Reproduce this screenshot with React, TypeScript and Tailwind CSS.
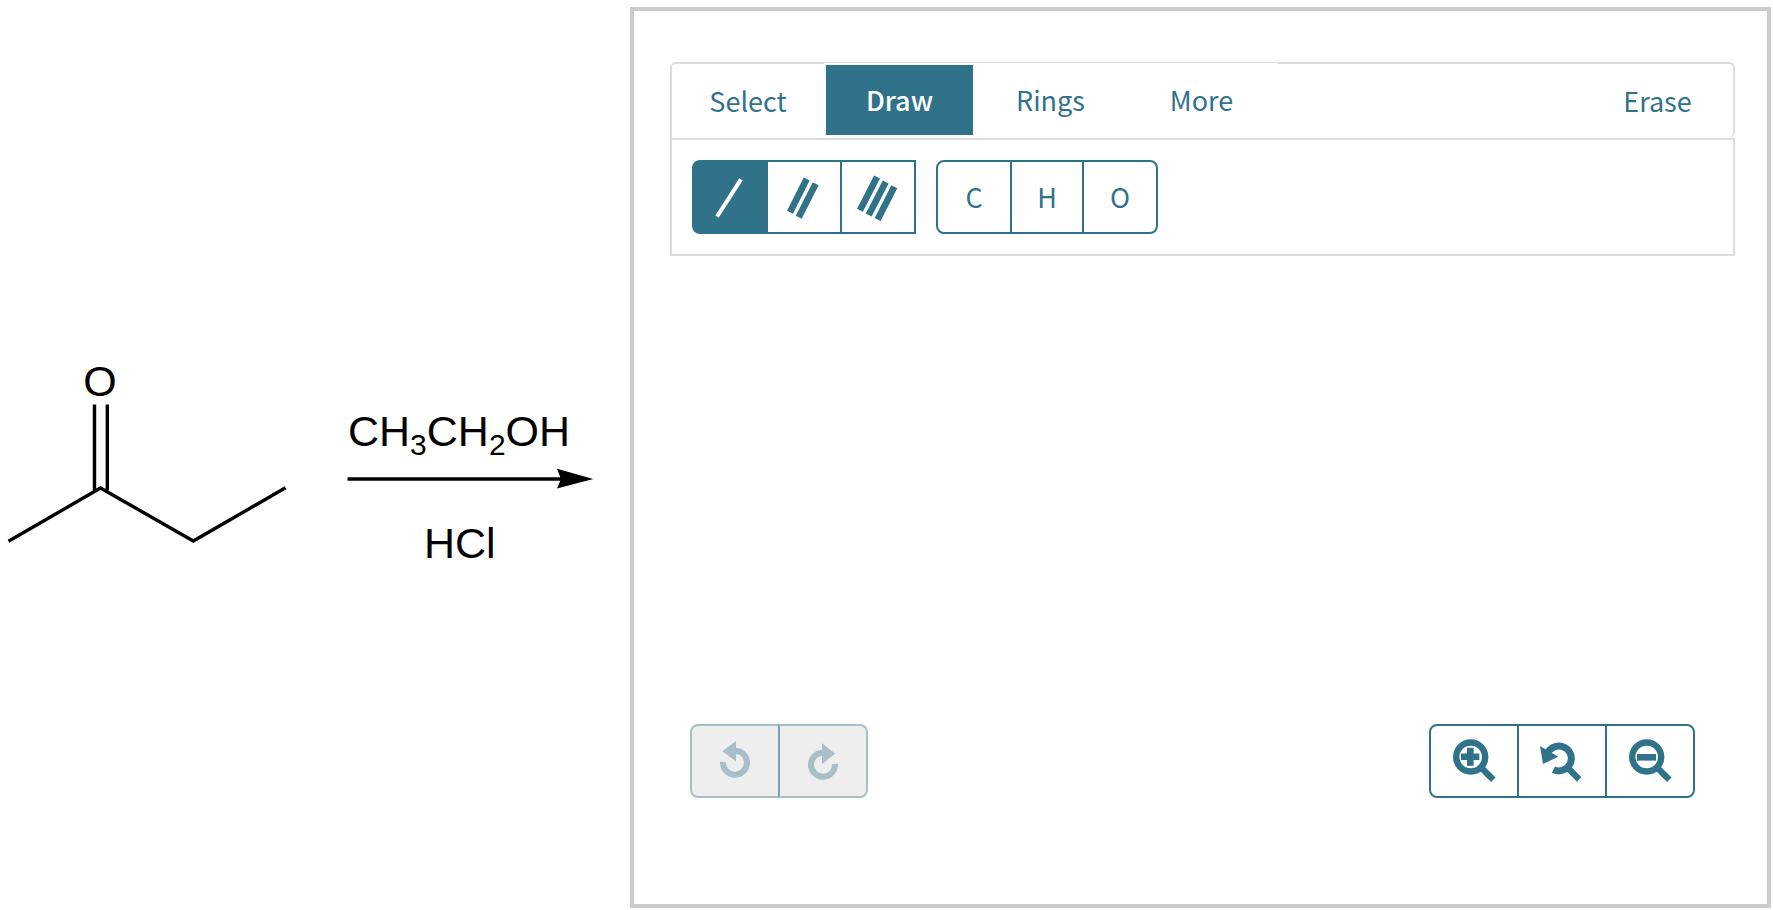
import { useState } from 'react';
import type { ReactNode } from 'react';

const tabs = ['Draw', 'Rings', 'More'];

const bonds = [
  { id: 'single', label: 'Single bond', width: 4, lines: ['M35 6.3 L11 43.7'] },
  { id: 'double', label: 'Double bond', width: 6.6, lines: ['M26.7 6 L10 39.3', 'M35.7 10.7 L18.7 44.3'] },
  { id: 'triple', label: 'Triple bond', width: 6.6, lines: ['M23 4 L6 37.3', 'M31.7 9 L14.7 42', 'M40.3 13.7 L23.7 46.5'] },
];

const atoms = [
  { symbol: 'C', className: 'w-[76px] rounded-l-lg' },
  { symbol: 'H', className: '-ml-0.5 w-[74px]' },
  { symbol: 'O', className: '-ml-0.5 w-[76px] rounded-r-lg' },
];

function Icon({ children }: { children: ReactNode }) {
  return (
    <svg width="48" height="48" viewBox="0 0 48 48" fill="none" stroke="currentColor" aria-hidden="true">
      {children}
    </svg>
  );
}

function Reaction() {
  return (
    <svg
      className="shrink-0"
      width="600"
      height="229"
      viewBox="0 343 600 229"
      fontFamily='"Liberation Sans", Arial, sans-serif'
      fontSize="43"
    >
      <g fill="none" stroke="#000" strokeWidth="3.4">
        <path d="M8.5 541.3 L100.5 488 L193.3 541 L285.5 487.8" />
        <path d="M94.5 404.5 V490.5 M107.3 404.5 V490.5" />
        <path d="M347.5 479 H565" />
      </g>
      <path d="M557 468.7 L593.3 479 L557 488.5 L561 479 Z" />
      <text x="100" y="396" textAnchor="middle">O</text>
      <text x="348" y="446">
        CH<tspan fontSize="30" dy="9">3</tspan>
        <tspan dy="-9">CH</tspan>
        <tspan fontSize="30" dy="9">2</tspan>
        <tspan dy="-9">OH</tspan>
      </text>
      <text x="424" y="558">HCl</text>
    </svg>
  );
}

export default function App() {
  const [tab, setTab] = useState('Draw');
  const [bond, setBond] = useState('single');

  const toolButton = 'flex h-[74px] items-center justify-center border-2 border-[#31728b]';

  return (
    <main className="flex min-h-screen bg-white pt-[7px] pr-0.5 pb-0.5 font-['Noto_Sans_CJK_SC',sans-serif] text-[27px] leading-9 text-[#31728b]">
      <section className="flex w-[630px] shrink-0 items-center text-black" aria-label="Reaction">
        <Reaction />
      </section>

      <section className="flex min-w-0 flex-1 flex-col border-4 border-[#cbcbcb] pt-[51px] pb-[106px]" aria-label="Structure editor">
        <div className="mr-8 ml-9">
          <div className="flex h-[76px] rounded-t-md rounded-br-md border-2 border-b-0 border-[#dcdcdc]">
            <button type="button" className="w-[152px]">Select</button>
            {tabs.map((name) => (
              <button
                key={name}
                type="button"
                onClick={() => setTab(name)}
                className={`-mt-px mb-px w-[151px] border-2 border-white ${tab === name ? 'bg-[#31728b] font-medium text-white' : 'bg-white'}`}
              >
                {name}
              </button>
            ))}
            <button type="button" className="ml-auto w-[151px]">Erase</button>
          </div>

          <div className="flex gap-5 border-2 border-[#dcdcdc] px-5 py-5">
            <div className="flex">
              {bonds.map((b, i) => (
                <button
                  key={b.id}
                  type="button"
                  aria-label={b.label}
                  onClick={() => setBond(b.id)}
                  className={`${toolButton} w-[76px] ${i === 0 ? 'rounded-l-lg' : '-ml-0.5'} ${bond === b.id ? 'bg-[#31728b] text-white' : ''}`}
                >
                  <Icon>
                    {b.lines.map((d) => (
                      <path key={d} d={d} strokeWidth={b.width} />
                    ))}
                  </Icon>
                </button>
              ))}
            </div>
            <div className="flex">
              {atoms.map((a) => (
                <button key={a.symbol} type="button" className={`${toolButton} ${a.className}`}>
                  {a.symbol}
                </button>
              ))}
            </div>
          </div>
        </div>

        {/* drawing canvas */}
        <div className="flex-1" />

        <div className="mr-[72px] ml-14 flex justify-between">
          <div className="flex text-[#a8bfc8]">
            <button type="button" disabled aria-label="Undo" className="flex h-[74px] w-[90px] items-center justify-center rounded-l-lg border-2 border-[#a8bfc8] bg-[#eeeeee]">
              <Icon>
                <path d="M12 25 A12 12 0 1 0 24.5 13.7" strokeWidth="6" />
                <path d="M11.3 14.3 L25 4 V24.5 Z" fill="currentColor" stroke="none" />
              </Icon>
            </button>
            <button type="button" disabled aria-label="Redo" className="-ml-0.5 flex h-[74px] w-[90px] items-center justify-center rounded-r-lg border-2 border-[#a8bfc8] border-l-[#7ba2b1] bg-[#eeeeee]">
              <Icon>
                <path d="M36 27 A12 12 0 1 1 23.5 15.7" strokeWidth="6" />
                <path d="M36.3 16.7 L23 6.3 V27 Z" fill="currentColor" stroke="none" />
              </Icon>
            </button>
          </div>

          <div className="flex">
            <button type="button" aria-label="Zoom in" className={`${toolButton} w-[90px] rounded-l-lg`}>
              <Icon>
                <circle cx="20.7" cy="20" r="14.5" strokeWidth="6.4" />
                <path d="M11 19.8 H29.3 M20.3 10.7 V28.7" strokeWidth="6.6" />
                <path d="M31 30.5 L43.3 42.7" strokeWidth="6.4" />
              </Icon>
            </button>
            <button type="button" aria-label="Reset zoom" className={`${toolButton} -ml-0.5 w-[90px]`}>
              <Icon>
                <path d="M9 18 A12.4 12.4 0 1 1 15.5 32.6" strokeWidth="7" />
                <path d="M2 9 L20.3 19.7 L5 27 Z" fill="currentColor" stroke="none" />
                <path d="M29 30 L41.2 42.5" strokeWidth="6.2" />
              </Icon>
            </button>
            <button type="button" aria-label="Zoom out" className={`${toolButton} -ml-0.5 w-[90px] rounded-r-lg`}>
              <Icon>
                <circle cx="20.7" cy="20" r="14.5" strokeWidth="6.4" />
                <path d="M11 20.3 H30" strokeWidth="6.6" />
                <path d="M31 30.5 L43.3 42.7" strokeWidth="6.4" />
              </Icon>
            </button>
          </div>
        </div>
      </section>
    </main>
  );
}
